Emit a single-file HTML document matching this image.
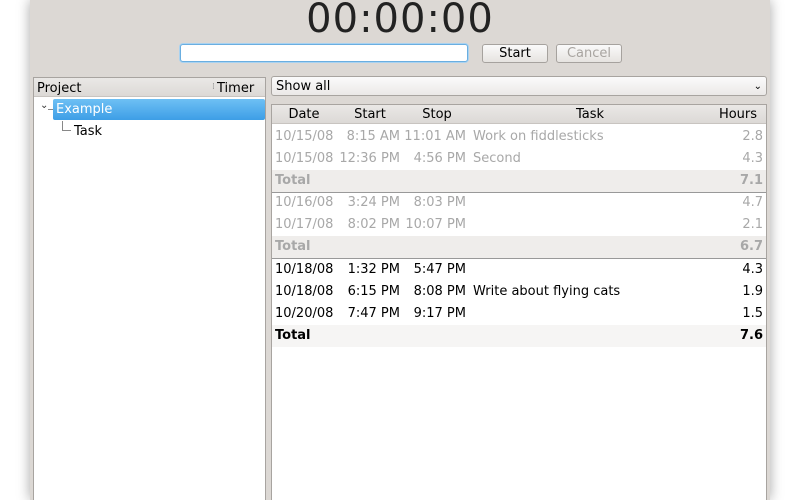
<!DOCTYPE html><html style="overflow:hidden;height:500px"><head><style>
*{margin:0;padding:0;box-sizing:border-box}
body{width:800px;height:500px;background:#fff;font-family:"DejaVu Sans","Liberation Sans",sans-serif;font-size:13px;position:relative;overflow:hidden}
.win{position:absolute;left:30px;top:0;width:740px;height:500px;background:#dcd8d4;box-shadow:0 0 12px rgba(0,0,0,.35)}
.abs{position:absolute}
.timer{left:0;width:800px;top:-4px;text-align:center;font-size:40px;color:#222;letter-spacing:1px}
.entry{left:180px;top:44px;width:288px;height:18px;background:#fff;border:1px solid #6aaee0;border-radius:3px;box-shadow:0 0 0 1px #a9d2f0}
.btn{top:44px;height:19px;border:1px solid #a6a29e;border-radius:3px;background:linear-gradient(#fafafa,#e6e3e0);text-align:center;line-height:17px}
.panel{background:#fff;border:1px solid #a8a4a0;border-bottom:none}
.hdr{background:linear-gradient(#eae8e6,#dcd9d6);height:19px;border-bottom:1px solid #c8c4c0;line-height:19px;position:relative}
.row{position:absolute;left:0;right:0;height:22px;line-height:22px}
.row span{position:absolute}
.g{color:#a8a8a8}
.tot{background:#efedeb;font-weight:bold}
.r{text-align:right}
</style></head><body>
<div class="win"></div>
<div class="abs timer">00:00:00</div>
<div class="abs entry"></div>
<div class="abs btn" style="left:482px;width:66px">Start</div>
<div class="abs btn" style="left:556px;width:66px;color:#a8a4a0">Cancel</div>

<div class="abs panel" style="left:33px;top:77px;width:233px;height:423px">
 <div class="hdr"><span style="position:absolute;left:3px;top:1px">Project</span><span style="position:absolute;left:178px;color:#999;font-size:9px">⁞</span><span style="position:absolute;left:183px;top:1px">Timer</span></div>
 <div class="abs" style="left:19px;top:21px;width:212px;height:21px;background:linear-gradient(#6ec0f4,#3d9ee6);border-radius:2px;color:#fff;line-height:21px;padding-left:3px">Example</div>
 <div class="abs" style="left:6px;top:22px;color:#333;font-size:10px">⌄</div>
 <div class="abs" style="left:14px;top:31px;width:5px;border-top:1px solid #888"></div>
 <div class="abs" style="left:28px;top:43px;height:9px;border-left:1px solid #888"></div>
 <div class="abs" style="left:28px;top:52px;width:9px;border-top:1px solid #888"></div>
 <div class="abs" style="left:40px;top:44px;line-height:20px">Task</div>
</div>

<div class="abs panel" style="left:271px;top:76px;width:496px;height:20px;border-radius:3px;border-bottom:1px solid #a8a4a0;background:linear-gradient(#fbfbfb,#ebe9e7);line-height:19px;padding-left:4px">Show all<span style="position:absolute;right:4px;font-size:10px">⌄</span></div>

<div class="abs panel" style="left:271px;top:104px;width:496px;height:396px">
 <div class="hdr" style="text-align:center;line-height:20px">
  <span class="abs" style="left:0;width:64px">Date</span>
  <span class="abs" style="left:64px;width:68px">Start</span>
  <span class="abs" style="left:132px;width:66px">Stop</span>
  <span class="abs" style="left:198px;width:240px">Task</span>
  <span class="abs" style="left:440px;width:52px">Hours</span>
 </div>
 <div class="abs" style="left:0;right:0;top:21px">
 <div class="row g" style="top:0"><span style="left:3px">10/15/08</span><span class="r" style="right:366px">8:15 AM</span><span class="r" style="right:300px">11:01 AM</span><span style="left:201px">Work on fiddlesticks</span><span style="right:3px">2.8</span></div>
 <div class="row g" style="top:22px"><span style="left:3px">10/15/08</span><span style="right:366px">12:36 PM</span><span style="right:300px">4:56 PM</span><span style="left:201px">Second</span><span style="right:3px">4.3</span></div>
 <div class="row g tot" style="top:44px"><span style="left:3px">Total</span><span style="right:3px">7.1</span></div>
 <div class="abs" style="left:0;right:0;top:66px;border-top:1px solid #999"></div>
 <div class="row g" style="top:66px"><span style="left:3px">10/16/08</span><span style="right:366px">3:24 PM</span><span style="right:300px">8:03 PM</span><span style="right:3px">4.7</span></div>
 <div class="row g" style="top:88px"><span style="left:3px">10/17/08</span><span style="right:366px">8:02 PM</span><span style="right:300px">10:07 PM</span><span style="right:3px">2.1</span></div>
 <div class="row g tot" style="top:110px"><span style="left:3px">Total</span><span style="right:3px">6.7</span></div>
 <div class="abs" style="left:0;right:0;top:132px;border-top:1px solid #999"></div>
 <div class="row" style="top:133px"><span style="left:3px">10/18/08</span><span style="right:366px">1:32 PM</span><span style="right:300px">5:47 PM</span><span style="right:3px">4.3</span></div>
 <div class="row" style="top:155px"><span style="left:3px">10/18/08</span><span style="right:366px">6:15 PM</span><span style="right:300px">8:08 PM</span><span style="left:201px">Write about flying cats</span><span style="right:3px">1.9</span></div>
 <div class="row" style="top:177px"><span style="left:3px">10/20/08</span><span style="right:366px">7:47 PM</span><span style="right:300px">9:17 PM</span><span style="right:3px">1.5</span></div>
 <div class="row tot" style="top:199px;background:#f6f5f4"><span style="left:3px">Total</span><span style="right:3px">7.6</span></div>
 </div>
</div>
</body></html>
